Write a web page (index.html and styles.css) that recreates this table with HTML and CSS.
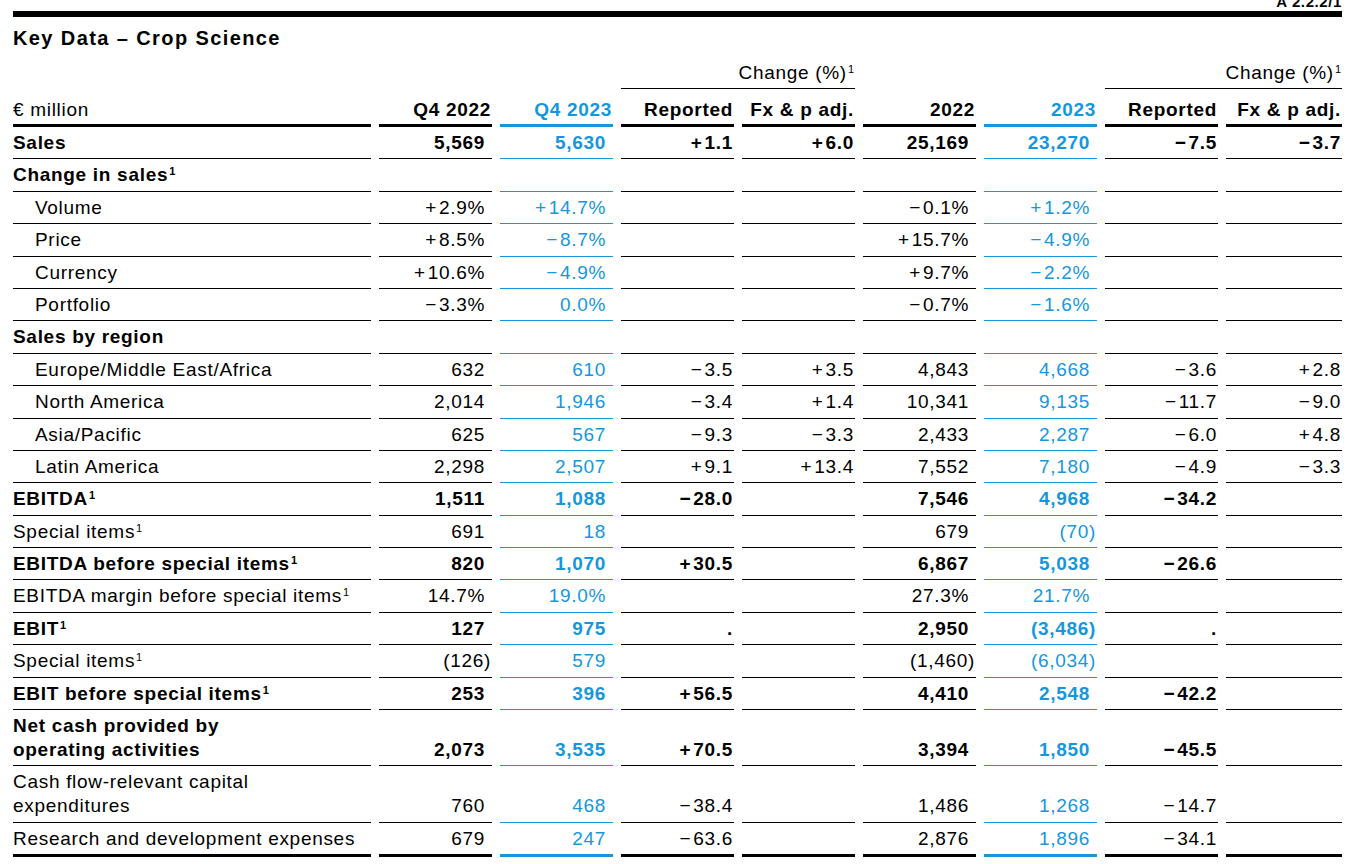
FILE: index.html
```html
<!DOCTYPE html>
<html lang="en">
<head>
<meta charset="utf-8">
<title>Key Data – Crop Science</title>
<link rel="stylesheet" href="styles.css">
</head>
<body>
<div class="page">
  <div class="ref">A 2.2.2/1</div>
  <div class="bar"></div>
  <h1 class="title">Key Data – Crop Science</h1>
  <table class="kd">
    <colgroup>
      <col class="w-label"><col class="w-num"><col class="w-num"><col class="w-num"><col class="w-num"><col class="w-num"><col class="w-num"><col class="w-num"><col class="w-last">
    </colgroup>
    <thead>
      <tr class="grp">
        <td></td><td></td><td></td>
        <td colspan="2" class="span">Change (%)<sup>1</sup></td>
        <td></td><td></td>
        <td colspan="2" class="span">Change (%)<sup>1</sup></td>
      </tr>
      <tr class="head">
        <th class="lab">€ million</th>
        <th>Q4 2022</th>
        <th class="blue">Q4 2023</th>
        <th>Reported</th>
        <th>Fx &amp; p adj.</th>
        <th>2022</th>
        <th class="blue">2023</th>
        <th>Reported</th>
        <th>Fx &amp; p adj.</th>
      </tr>
    </thead>
    <tbody>
      <tr class="bold">
        <td>Sales</td><td class="n">5,569</td><td class="n blue">5,630</td><td class="c"><span class="sg">+</span>1.1</td><td class="c"><span class="sg">+</span>6.0</td><td class="n">25,169</td><td class="n blue">23,270</td><td class="c"><span class="sg">−</span>7.5</td><td class="c"><span class="sg">−</span>3.7</td>
      </tr>
      <tr class="bold">
        <td>Change in sales<sup>1</sup></td><td class="n"></td><td class="n blue"></td><td class="c"></td><td class="c"></td><td class="n"></td><td class="n blue"></td><td class="c"></td><td class="c"></td>
      </tr>
      <tr>
        <td class="ind">Volume</td><td class="n"><span class="sg">+</span>2.9%</td><td class="n blue"><span class="sg">+</span>14.7%</td><td class="c"></td><td class="c"></td><td class="n"><span class="sg">−</span>0.1%</td><td class="n blue"><span class="sg">+</span>1.2%</td><td class="c"></td><td class="c"></td>
      </tr>
      <tr>
        <td class="ind">Price</td><td class="n"><span class="sg">+</span>8.5%</td><td class="n blue"><span class="sg">−</span>8.7%</td><td class="c"></td><td class="c"></td><td class="n"><span class="sg">+</span>15.7%</td><td class="n blue"><span class="sg">−</span>4.9%</td><td class="c"></td><td class="c"></td>
      </tr>
      <tr>
        <td class="ind">Currency</td><td class="n"><span class="sg">+</span>10.6%</td><td class="n blue"><span class="sg">−</span>4.9%</td><td class="c"></td><td class="c"></td><td class="n"><span class="sg">+</span>9.7%</td><td class="n blue"><span class="sg">−</span>2.2%</td><td class="c"></td><td class="c"></td>
      </tr>
      <tr>
        <td class="ind">Portfolio</td><td class="n"><span class="sg">−</span>3.3%</td><td class="n blue">0.0%</td><td class="c"></td><td class="c"></td><td class="n"><span class="sg">−</span>0.7%</td><td class="n blue"><span class="sg">−</span>1.6%</td><td class="c"></td><td class="c"></td>
      </tr>
      <tr class="bold">
        <td>Sales by region</td><td class="n"></td><td class="n blue"></td><td class="c"></td><td class="c"></td><td class="n"></td><td class="n blue"></td><td class="c"></td><td class="c"></td>
      </tr>
      <tr>
        <td class="ind">Europe/Middle East/Africa</td><td class="n">632</td><td class="n blue">610</td><td class="c"><span class="sg">−</span>3.5</td><td class="c"><span class="sg">+</span>3.5</td><td class="n">4,843</td><td class="n blue">4,668</td><td class="c"><span class="sg">−</span>3.6</td><td class="c"><span class="sg">+</span>2.8</td>
      </tr>
      <tr>
        <td class="ind">North America</td><td class="n">2,014</td><td class="n blue">1,946</td><td class="c"><span class="sg">−</span>3.4</td><td class="c"><span class="sg">+</span>1.4</td><td class="n">10,341</td><td class="n blue">9,135</td><td class="c"><span class="sg">−</span>11.7</td><td class="c"><span class="sg">−</span>9.0</td>
      </tr>
      <tr>
        <td class="ind">Asia/Pacific</td><td class="n">625</td><td class="n blue">567</td><td class="c"><span class="sg">−</span>9.3</td><td class="c"><span class="sg">−</span>3.3</td><td class="n">2,433</td><td class="n blue">2,287</td><td class="c"><span class="sg">−</span>6.0</td><td class="c"><span class="sg">+</span>4.8</td>
      </tr>
      <tr>
        <td class="ind">Latin America</td><td class="n">2,298</td><td class="n blue">2,507</td><td class="c"><span class="sg">+</span>9.1</td><td class="c"><span class="sg">+</span>13.4</td><td class="n">7,552</td><td class="n blue">7,180</td><td class="c"><span class="sg">−</span>4.9</td><td class="c"><span class="sg">−</span>3.3</td>
      </tr>
      <tr class="bold">
        <td>EBITDA<sup>1</sup></td><td class="n">1,511</td><td class="n blue">1,088</td><td class="c"><span class="sg">−</span>28.0</td><td class="c"></td><td class="n">7,546</td><td class="n blue">4,968</td><td class="c"><span class="sg">−</span>34.2</td><td class="c"></td>
      </tr>
      <tr>
        <td>Special items<sup>1</sup></td><td class="n">691</td><td class="n blue">18</td><td class="c"></td><td class="c"></td><td class="n">679</td><td class="n blue par">(70)</td><td class="c"></td><td class="c"></td>
      </tr>
      <tr class="bold">
        <td>EBITDA before special items<sup>1</sup></td><td class="n">820</td><td class="n blue">1,070</td><td class="c"><span class="sg">+</span>30.5</td><td class="c"></td><td class="n">6,867</td><td class="n blue">5,038</td><td class="c"><span class="sg">−</span>26.6</td><td class="c"></td>
      </tr>
      <tr>
        <td>EBITDA margin before special items<sup>1</sup></td><td class="n">14.7%</td><td class="n blue">19.0%</td><td class="c"></td><td class="c"></td><td class="n">27.3%</td><td class="n blue">21.7%</td><td class="c"></td><td class="c"></td>
      </tr>
      <tr class="bold">
        <td>EBIT<sup>1</sup></td><td class="n">127</td><td class="n blue">975</td><td class="c">.</td><td class="c"></td><td class="n">2,950</td><td class="n blue par">(3,486)</td><td class="c">.</td><td class="c"></td>
      </tr>
      <tr>
        <td>Special items<sup>1</sup></td><td class="n par">(126)</td><td class="n blue">579</td><td class="c"></td><td class="c"></td><td class="n par">(1,460)</td><td class="n blue par">(6,034)</td><td class="c"></td><td class="c"></td>
      </tr>
      <tr class="bold">
        <td>EBIT before special items<sup>1</sup></td><td class="n">253</td><td class="n blue">396</td><td class="c"><span class="sg">+</span>56.5</td><td class="c"></td><td class="n">4,410</td><td class="n blue">2,548</td><td class="c"><span class="sg">−</span>42.2</td><td class="c"></td>
      </tr>
      <tr class="bold">
        <td>Net cash provided by<br>operating activities</td><td class="n">2,073</td><td class="n blue">3,535</td><td class="c"><span class="sg">+</span>70.5</td><td class="c"></td><td class="n">3,394</td><td class="n blue">1,850</td><td class="c"><span class="sg">−</span>45.5</td><td class="c"></td>
      </tr>
      <tr>
        <td>Cash flow-relevant capital<br>expenditures</td><td class="n">760</td><td class="n blue">468</td><td class="c"><span class="sg">−</span>38.4</td><td class="c"></td><td class="n">1,486</td><td class="n blue">1,268</td><td class="c"><span class="sg">−</span>14.7</td><td class="c"></td>
      </tr>
      <tr class="last">
        <td>Research and development expenses</td><td class="n">679</td><td class="n blue">247</td><td class="c"><span class="sg">−</span>63.6</td><td class="c"></td><td class="n">2,876</td><td class="n blue">1,896</td><td class="c"><span class="sg">−</span>34.1</td><td class="c"></td>
      </tr>
    </tbody>
  </table>
</div>
</body>
</html>
```
FILE: styles.css
```css
html, body {
  margin: 0;
  padding: 0;
  background: #ffffff;
}

body {
  font-family: "Liberation Sans", Arial, Helvetica, sans-serif;
  color: #000000;
}

.page {
  padding: 0 14px 0 13px;
}

.ref {
  height: 11px;
  line-height: 4px;
  font-size: 15px;
  font-weight: bold;
  text-align: right;
  letter-spacing: 0.6px;
}

.bar {
  height: 6px;
  background: #000000;
}

.title {
  margin: 9px 0 0;
  font-size: 20px;
  line-height: 24px;
  font-weight: bold;
  letter-spacing: 1.4px;
}

.kd {
  border-collapse: separate;
  border-spacing: 8px 0;
  margin: 0 -8px;
  width: calc(100% + 16px);
  table-layout: fixed;
}

.w-label { width: 358px; }
.w-num { width: 113px; }
.w-last { width: 116px; }

.kd td,
.kd th {
  padding: 4px 0 3.4px;
  font-size: 19px;
  line-height: 24px;
  letter-spacing: 0.7px;
  vertical-align: bottom;
  white-space: nowrap;
  border-bottom: 1px solid #000000;
  text-align: left;
  font-weight: normal;
  color: #000000;
}

.kd sup {
  font-size: 11px;
  line-height: 0;
  vertical-align: 6px;
  letter-spacing: 0;
  margin-left: 1px;
}

.kd .sg {
  letter-spacing: 2.6px;
}

.kd .grp td {
  border-bottom: none;
  padding: 11px 0 3px;
}

.kd .grp td.span {
  border-bottom: 1px solid #000000;
  text-align: right;
  padding-right: 1px;
}

.kd .head th {
  padding: 9px 1px 2px 0;
  border-bottom: 3px solid #000000;
  font-weight: bold;
  text-align: right;
}

.kd .head th.lab {
  font-weight: normal;
  text-align: left;
}

.kd td.n {
  text-align: right;
  padding-right: 7px;
}

.kd td.n.par {
  padding-right: 1px;
}

.kd td.c {
  text-align: right;
  padding-right: 1px;
}

.kd td.ind {
  padding-left: 22px;
}

.kd .blue {
  color: #1597de;
  border-bottom-color: #1597de !important;
}

.kd tr.bold td {
  font-weight: bold;
}

.kd tr.last td {
  border-bottom-width: 3px;
}
```
